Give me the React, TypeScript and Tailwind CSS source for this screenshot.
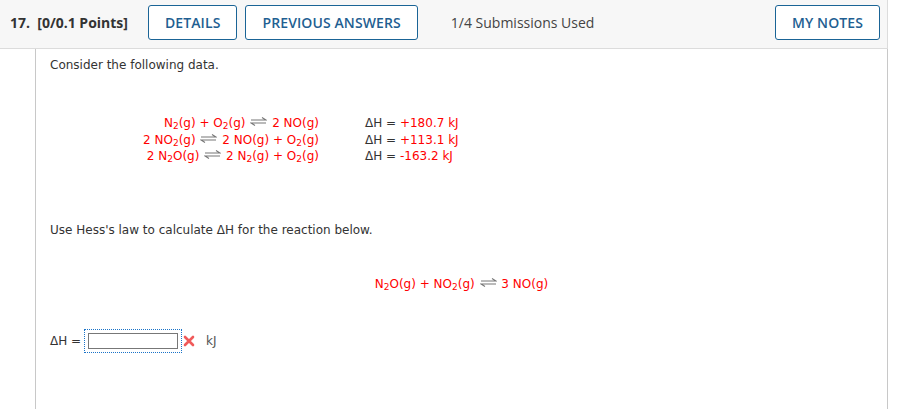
import React from 'react';

const Sub = ({ children }: { children: React.ReactNode }) => <sub>{children}</sub>;

// equilibrium harpoons, drawn because the font glyph is too narrow
const Arrow = () => (
    <svg width="17" height="9" viewBox="0 0 17 9" className="inline-block align-[1px] mx-[1px]">
        <path d="M1 3 H16 L12 0.5" stroke="#777" strokeWidth="1.1" fill="none" />
        <path d="M16 6 H1 L5 8.5" stroke="#777" strokeWidth="1.1" fill="none" />
    </svg>
);

const reactions: { eq: React.ReactNode; dh: string }[] = [
    {
        eq: <>N<Sub>2</Sub>(g) + O<Sub>2</Sub>(g) <Arrow /> 2 NO(g)</>,
        dh: '+180.7 kJ',
    },
    {
        eq: <>2 NO<Sub>2</Sub>(g) <Arrow /> 2 NO(g) + O<Sub>2</Sub>(g)</>,
        dh: '+113.1 kJ',
    },
    {
        eq: <>2 N<Sub>2</Sub>O(g) <Arrow /> 2 N<Sub>2</Sub>(g) + O<Sub>2</Sub>(g)</>,
        dh: '-163.2 kJ',
    },
];

const HeaderButton = ({ label }: { label: string }) => (
    <button className="h-[35px] px-[16px] rounded-[3px] border border-[#1a6496] bg-white text-[#1f5f92] text-[14px] font-semibold tracking-[0.1px]">
        {label}
    </button>
);

export default function App() {
    return (
        <div className="w-[888px] min-h-[409px] bg-white flex flex-col font-['Open_Sans',sans-serif]">
            {/* Question header */}
            <div className="h-[49px] bg-[#f7f7f7] border-b border-r border-[#dcdcdc] flex items-start pl-[10px] pr-[7px] pt-[5px]">
                <span className="h-[35px] flex items-center text-[14px] font-bold text-[#333]">17.&nbsp; [0/0.1 Points]</span>
                <div className="ml-[20px] flex gap-[8px]">
                    <HeaderButton label="DETAILS" />
                    <HeaderButton label="PREVIOUS ANSWERS" />
                </div>
                <span className="h-[35px] flex items-center ml-[33px] text-[14px] text-[#444]">1/4 Submissions Used</span>
                <div className="ml-auto">
                    <HeaderButton label="MY NOTES" />
                </div>
            </div>

            {/* Question body */}
            <div className="ml-[35px] flex-1 border-l border-r border-[#c8c8c8] pl-[14px] pt-[8px] font-['DejaVu_Sans',Verdana,sans-serif] text-[12px] text-[#333]">
                <p className="leading-[16px]">Consider the following data.</p>

                <div className="mt-[42px] flex leading-[16.5px]">
                    <div className="w-[269px] text-right text-[#f00]">
                        {reactions.map((r, i) => (
                            <div key={i}>{r.eq}</div>
                        ))}
                    </div>
                    <div className="ml-[46px]">
                        {reactions.map((r, i) => (
                            <div key={i}>
                                ΔH = <span className="text-[#f00]">{r.dh}</span>
                            </div>
                        ))}
                    </div>
                </div>

                <p className="mt-[57px] leading-[16px]">Use Hess's law to calculate ΔH for the reaction below.</p>

                <div className="mt-[38px] pr-[14px] text-center text-[#f00] leading-[16px]">
                    N<Sub>2</Sub>O(g) + NO<Sub>2</Sub>(g) <Arrow /> 3 NO(g)
                </div>

                <div className="mt-[37px] flex items-center">
                    <span>ΔH =</span>
                    <div className="ml-[3px] border border-dotted border-[#1a73c8] p-[3px]">
                        <div className="w-[90px] h-[16px] border border-[#777] bg-white" />
                    </div>
                    <svg width="12" height="12" viewBox="0 0 12 12" className="ml-[1px]">
                        <path d="M2 2 L10 10 M10 2 L2 10" stroke="#f05a5a" strokeWidth="2.6" strokeLinecap="round" />
                    </svg>
                    <span className="ml-[11px] text-[#555]">kJ</span>
                </div>
            </div>
        </div>
    );
}
